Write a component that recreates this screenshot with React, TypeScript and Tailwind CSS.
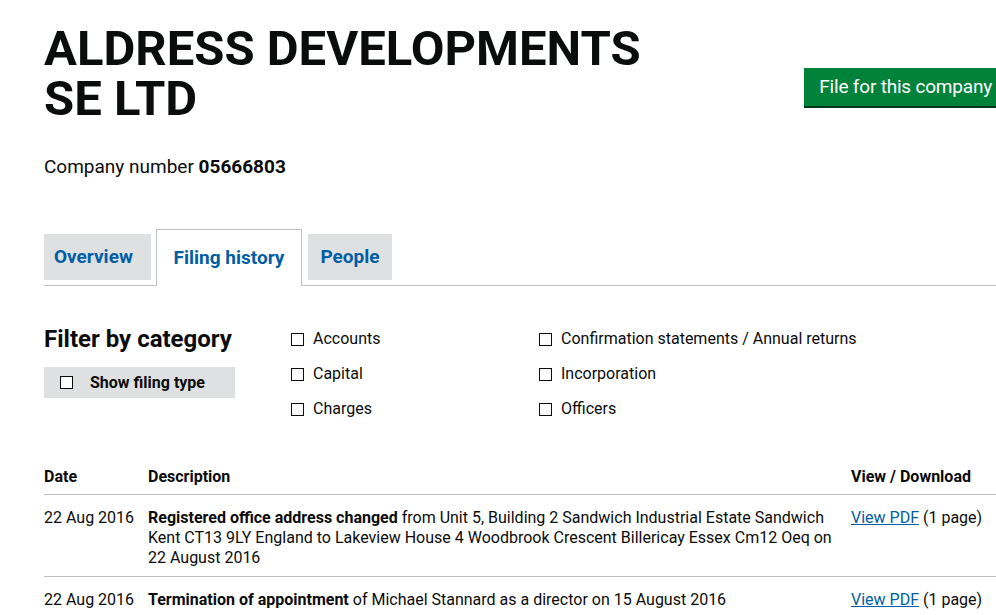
import React from "react";

const filters = [
  ["Accounts", "Confirmation statements / Annual returns"],
  ["Capital", "Incorporation"],
  ["Charges", "Officers"],
];

const Box = () => (
  <span className="inline-block w-[13px] h-[13px] border border-[#0b0c0c] bg-white shrink-0" />
);

const App = () => {
  return (
    <div className="w-[996px] h-[615px] overflow-hidden bg-white text-[#0b0c0c] font-['Roboto',sans-serif]">
      <div className="w-[960px] ml-[44px]">
        {/* header */}
        <div className="flex justify-between items-start pt-[24px]">
          <h1 className="text-[49px] leading-[50px] font-bold w-[640px]">
            ALDRESS DEVELOPMENTS SE LTD
          </h1>
          <a className="mt-[44px] bg-[#00823b] text-white text-[19px] leading-[24px] pl-[15px] pr-[12px] pt-[7px] pb-[7px] tracking-[-0.2px] shadow-[0_2px_0_#003618]">
            File for this company
          </a>
        </div>
        <p className="mt-[30px] text-[19px] leading-[25px]">
          Company number <strong className="font-bold">05666803</strong>
        </p>

        {/* tabs */}
        <div className="mt-[50px] flex items-end border-b border-[#bfc1c3] h-[57px]">
          <a className="w-[107px] bg-[#dee0e2] text-[#005ea5] font-bold text-[19px] h-[46px] flex items-center pl-[10px] mb-[5px]">
            Overview
          </a>
          <a className="w-[146px] ml-[5px] bg-white text-[#005ea5] font-bold text-[19px] h-[57px] flex items-center justify-center border border-b-0 border-[#bfc1c3] -mb-px">
            Filing history
          </a>
          <a className="w-[84px] ml-[6px] bg-[#dee0e2] text-[#005ea5] font-bold text-[19px] h-[46px] flex items-center justify-center mb-[5px]">
            People
          </a>
        </div>

        {/* filters */}
        <div className="mt-[38px] flex">
          <div className="w-[247px]">
            <h2 className="text-[24px] leading-[30px] font-bold">Filter by category</h2>
            <div className="mt-[13px] w-[191px] h-[31px] bg-[#dee0e2] flex items-center pl-[16px]">
              <Box />
              <span className="ml-[17px] text-[16px] font-bold">Show filing type</span>
            </div>
          </div>
          <div className="grid grid-cols-[248px_1fr] gap-y-[15px] pt-[5px]">
            {filters.map((row) =>
              row.map((label) => (
                <label key={label} className="flex items-center h-[20px] text-[16px]">
                  <Box />
                  <span className="ml-[9px]">{label}</span>
                </label>
              ))
            )}
          </div>
        </div>

        {/* table */}
        <table className="mt-[40px] w-full text-[16px] leading-[20px] border-collapse">
          <thead>
            <tr className="border-b border-[#bfc1c3]">
              <th className="text-left font-bold w-[104px] pt-[8px] pb-[7px]">Date</th>
              <th className="text-left font-bold pt-[8px] pb-[7px]">Description</th>
              <th className="text-left font-bold w-[153px] pt-[8px] pb-[7px]">View / Download</th>
            </tr>
          </thead>
          <tbody>
            <tr className="border-b border-[#bfc1c3]">
              <td className="align-top pt-[13px] pb-[8px] pr-[10px]">22 Aug 2016</td>
              <td className="align-top pt-[13px] pb-[8px] pr-[6px]">
                <strong className="font-bold">Registered office address changed</strong> from Unit 5,
                Building 2 Sandwich Industrial Estate Sandwich Kent CT13 9LY England to Lakeview House 4
                Woodbrook Crescent Billericay Essex Cm12 Oeq on 22 August 2016
              </td>
              <td className="align-top pt-[13px] pb-[8px]">
                <a className="text-[#005ea5] underline">View PDF</a> (1 page)
              </td>
            </tr>
            <tr className="border-b border-[#bfc1c3]">
              <td className="align-top pt-[13px] pb-[8px] pr-[10px]">22 Aug 2016</td>
              <td className="align-top pt-[13px] pb-[8px] pr-[6px]">
                <strong className="font-bold">Termination of appointment</strong> of Michael Stannard as a
                director on 15 August 2016
              </td>
              <td className="align-top pt-[13px] pb-[8px]">
                <a className="text-[#005ea5] underline">View PDF</a> (1 page)
              </td>
            </tr>
          </tbody>
        </table>
      </div>
    </div>
  );
};

export default App;
